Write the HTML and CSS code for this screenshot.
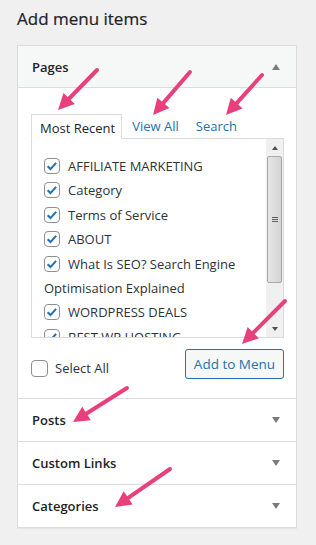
FILE: index.html
```html
<!DOCTYPE html>
<html lang="en">
<head>
    <meta charset="UTF-8">
    <meta name="viewport" content="width=device-width, initial-scale=1.0">
    <title>Add menu items</title>
    <link rel="stylesheet" href="styles.css">
</head>
<body>
    <div class="menu-items">
        <h2 class="menu-title">Add menu items</h2>

        <div class="accordion">
            <div class="section open">
                <div class="section-title">
                    Pages
                    <span class="toggle up"></span>
                </div>
                <div class="section-body">
                    <ul class="tabs">
                        <li class="tab active">Most Recent</li>
                        <li class="tab">View All</li>
                        <li class="tab">Search</li>
                    </ul>
                    <div class="list-box">
                        <ul class="page-list">
                            <li><span class="check on"></span>AFFILIATE MARKETING</li>
                            <li><span class="check on"></span>Category</li>
                            <li><span class="check on"></span>Terms of Service</li>
                            <li><span class="check on"></span>ABOUT</li>
                            <li><span class="check on"></span>What Is SEO? Search Engine Optimisation Explained</li>
                            <li><span class="check on"></span>WORDPRESS DEALS</li>
                            <li><span class="check on"></span>BEST WP HOSTING</li>
                        </ul>
                        <div class="scrollbar">
                            <div class="scroll-btn"><span class="scroll-arrow up"></span></div>
                            <div class="scroll-track">
                                <div class="scroll-thumb"><span class="grip"></span></div>
                            </div>
                            <div class="scroll-btn"><span class="scroll-arrow down"></span></div>
                        </div>
                    </div>
                    <div class="list-footer">
                        <label class="select-all"><span class="check"></span>Select All</label>
                        <button class="add-btn">Add to Menu</button>
                    </div>
                </div>
            </div>
            <div class="section">
                <div class="section-title">Posts<span class="toggle"></span></div>
            </div>
            <div class="section">
                <div class="section-title">Custom Links<span class="toggle"></span></div>
            </div>
            <div class="section">
                <div class="section-title">Categories<span class="toggle"></span></div>
            </div>
        </div>
    </div>

    <!-- annotation arrows drawn over the screenshot -->
    <svg class="arrows" width="316" height="545" viewBox="0 0 316 545">
        <g stroke="#e8407c" stroke-width="4" stroke-linecap="round">
            <line x1="97" y1="70" x2="69.2" y2="98.5"/>
            <line x1="190" y1="72" x2="163.4" y2="102.9"/>
            <line x1="262" y1="75" x2="236.7" y2="103.1"/>
            <line x1="285" y1="301" x2="253.3" y2="332.7"/>
            <line x1="127" y1="388" x2="86.5" y2="413.5"/>
            <line x1="170" y1="469" x2="128.2" y2="497.9"/>
        </g>
        <g fill="#e8407c">
            <polygon points="58,110 74.9,104.1 63.5,92.9"/>
            <polygon points="153,115 169.5,108.1 157.3,97.7"/>
            <polygon points="226,115 242.6,108.5 230.8,97.8"/>
            <polygon points="242,344 258.9,338.3 247.6,327"/>
            <polygon points="73,422 90.8,420.3 82.2,406.7"/>
            <polygon points="115,507 132.7,504.5 123.7,491.3"/>
        </g>
    </svg>
</body>
</html>
```

FILE: styles.css
```css
* {
    box-sizing: border-box;
}

body {
    margin: 0;
    background: #f0f0f1;
    font-family: 'Open Sans', 'Noto Sans', sans-serif;
    color: #2c3338;
    position: relative;
    width: 316px;
    height: 545px;
    overflow: hidden;
}

.menu-items {
    padding: 7px 19px 0 17px;
}

.menu-title {
    margin: 0;
    font-size: 17px;
    font-weight: 400;
    line-height: 24px;
    color: #1d2327;
    -webkit-text-stroke: 0.2px #1d2327;
}

.accordion {
    margin-top: 14px;
    border: 1px solid #dcdcde;
    background: #fff;
    box-shadow: 0 1px 1px rgba(0, 0, 0, 0.04);
}

.section {
    border-bottom: 1px solid #dcdcde;
}

.section:last-child {
    border-bottom: none;
}

.section-title {
    height: 42px;
    display: flex;
    align-items: center;
    justify-content: space-between;
    padding: 0 16px 0 14px;
    font-size: 13px;
    font-weight: 600;
    color: #1d2327;
}

.section.open .section-title {
    background: #f6f7f7;
    border-bottom: 1px solid #dcdcde;
}

.toggle {
    width: 0;
    height: 0;
    border-left: 4.5px solid transparent;
    border-right: 4.5px solid transparent;
    border-top: 6px solid #787c82;
}

.toggle.up {
    border-top: none;
    border-bottom: 6px solid #787c82;
}

.section-body {
    padding: 25px 12px 19px 13px;
}

.tabs {
    list-style: none;
    margin: 0;
    padding: 0;
    display: flex;
    align-items: flex-end;
    font-size: 13px;
}

.tab {
    height: 25px;
    line-height: 26px;
    color: #2271b1;
    margin-left: 17px;
}

.tab.active {
    color: #1d2327;
    margin-left: 0;
    padding: 0 6px 0 8px;
    border: 1px solid #dcdcde;
    border-bottom: 1px solid #fff;
    margin-bottom: -1px;
    background: #fff;
    position: relative;
    z-index: 1;
}

.tab.active + .tab {
    margin-left: 10px;
}

.list-box {
    height: 200px;
    border: 1px solid #dcdcde;
    display: flex;
    overflow: hidden;
}

.page-list {
    list-style: none;
    margin: 0;
    padding: 15px 0 0 12px;
    flex: 1;
    font-size: 13px;
    line-height: 24.4px;
    color: #2c3338;
}

.check {
    display: inline-block;
    width: 16px;
    height: 16px;
    border: 1px solid #8c8f94;
    border-radius: 4px;
    background: #fff;
    vertical-align: -3px;
    margin-right: 8px;
}

.check.on {
    background: #fff url("data:image/svg+xml,%3Csvg xmlns='http://www.w3.org/2000/svg' viewBox='0 0 16 16'%3E%3Cpath d='M3.6 8.2l2.9 2.9 5.6-6.2' fill='none' stroke='%232271b1' stroke-width='2.1'/%3E%3C/svg%3E") center / 16px no-repeat;
}

.scrollbar {
    width: 17px;
    background: #f0f0f0;
    display: flex;
    flex-direction: column;
    flex-shrink: 0;
}

.scroll-btn {
    height: 17px;
    display: flex;
    align-items: center;
    justify-content: center;
}

.scroll-arrow {
    width: 0;
    height: 0;
    border-left: 3.5px solid transparent;
    border-right: 3.5px solid transparent;
}

.scroll-arrow.up {
    border-bottom: 4px solid #505050;
}

.scroll-arrow.down {
    border-top: 4px solid #505050;
}

.scroll-track {
    flex: 1;
}

.scroll-thumb {
    height: 127px;
    margin: 0 1px;
    border: 1px solid #a8a8a8;
    border-radius: 2px;
    background: linear-gradient(to right, #e6e6e6, #d4d4d4);
    display: flex;
    align-items: center;
    justify-content: center;
}

.grip {
    width: 6px;
    height: 5px;
    border-top: 1px solid #606060;
    border-bottom: 1px solid #606060;
    position: relative;
}

.grip::after {
    content: '';
    position: absolute;
    left: 0;
    right: 0;
    top: 1px;
    border-top: 1px solid #606060;
}

.list-footer {
    display: flex;
    justify-content: space-between;
    align-items: flex-end;
    margin-top: 11px;
}

.select-all {
    font-size: 13px;
    color: #2c3338;
    display: flex;
    align-items: center;
    margin-bottom: 2px;
}

.select-all .check {
    width: 17px;
    height: 17px;
    margin-right: 7px;
    vertical-align: 0;
}

.add-btn {
    width: 99px;
    height: 30px;
    border: 1px solid #2271b1;
    border-radius: 3px;
    background: #f6f7f7;
    color: #2271b1;
    font-family: 'Open Sans', 'Noto Sans', sans-serif;
    font-size: 13.5px;
    padding: 0;
}

.arrows {
    position: absolute;
    top: 0;
    left: 0;
    pointer-events: none;
}
```
